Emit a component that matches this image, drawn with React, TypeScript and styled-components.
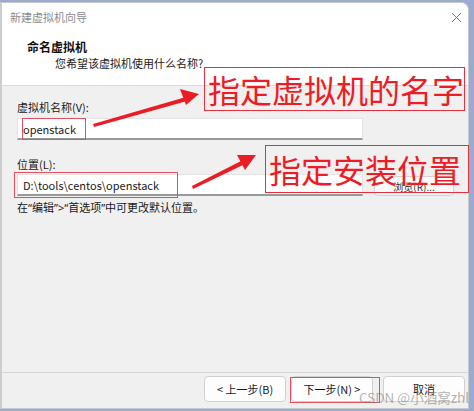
import React from "react"
import styled, { createGlobalStyle } from "styled-components"

const GlobalStyle = createGlobalStyle`
    * { box-sizing: border-box; }
    body {
        margin: 0;
        font-family: "Noto Sans CJK SC", "Noto Sans", sans-serif;
    }
`

const Root = styled.div`
    position: relative;
    width: 474px;
    height: 411px;
    overflow: hidden;
    background: #9aabd2;
`

const Window = styled.div`
    width: 469px;
    height: 407px;
    margin-top: 2px;
    display: flex;
    flex-direction: column;
    background: #f0f0f0;
    border: 1px solid #c8c8c8;
    border-left: 2px solid #cdcdcd;
    border-top-right-radius: 8px;
    overflow: hidden;
`

const Header = styled.div`
    height: 83px;
    flex-shrink: 0;
    background: #ffffff;
    border-bottom: 1px solid #dadada;
`

const TitleBar = styled.div`
    height: 28px;
    display: flex;
    align-items: center;
    justify-content: space-between;
    padding: 0 6px 0 8px;
    font-size: 11px;
    color: #8c8c8c;
`

const Close = styled.svg`
    width: 11px;
    height: 11px;
`

const Heading = styled.div`
    margin: 8px 0 0 25px;
    font-size: 12px;
    line-height: 16px;
    font-weight: 700;
    color: #111;
`

const SubHeading = styled.div`
    margin-left: 53px;
    font-size: 11px;
    line-height: 16px;
    color: #222;
`

const Body = styled.div`
    flex: 1;
    padding: 13px 0 0 15px;
    display: flex;
    flex-direction: column;
`

const Label = styled.div<{ $top?: number }>`
    margin-top: ${(p) => p.$top ?? 0}px;
    font-size: 11px;
    line-height: 16px;
    color: #1a1a1a;
`

const Row = styled.div`
    display: flex;
    align-items: center;
    gap: 11px;
`

const Field = styled.div<{ $top: number }>`
    width: 346px;
    height: 22px;
    margin-top: ${(p) => p.$top}px;
    padding-left: 5px;
    display: flex;
    align-items: center;
    background: #ffffff;
    border: 1px solid #e4e4e4;
    border-bottom: 2px solid #9a9a9a;
    font-size: 11px;
    color: #1a1a1a;
`

const Browse = styled.div`
    width: 80px;
    height: 20px;
    margin-top: 4px;
    display: flex;
    align-items: center;
    justify-content: center;
    background: #fbfbfb;
    border: 1px solid #d4d4d4;
    border-radius: 4px;
    font-size: 10px;
    color: #333;
`

const Hint = styled.div`
    margin-top: 4px;
    font-family: "Noto Sans", "Noto Sans CJK SC", sans-serif;
    font-size: 11px;
    line-height: 16px;
    color: #1a1a1a;
`

const Footer = styled.div`
    height: 36px;
    flex-shrink: 0;
    display: flex;
    justify-content: flex-end;
    gap: 5px;
    padding: 3px 3px 0 0;
    border-top: 1px solid #d6d6d6;
`

const Button = styled.div<{ $gap?: number }>`
    width: 82px;
    height: 26px;
    margin-left: ${(p) => p.$gap ?? 0}px;
    display: flex;
    align-items: center;
    justify-content: center;
    background: #fdfdfd;
    border: 1px solid #d0d0d0;
    border-radius: 4px;
    font-size: 11px;
    color: #1a1a1a;
`

const Mark = styled.div<{ $x: number; $y: number; $w: number; $h: number }>`
    position: absolute;
    left: ${(p) => p.$x}px;
    top: ${(p) => p.$y}px;
    width: ${(p) => p.$w}px;
    height: ${(p) => p.$h}px;
    border: 1px solid #e0505f;
`

const Callout = styled.div<{ $x: number; $y: number; $w: number; $h: number }>`
    position: absolute;
    left: ${(p) => p.$x}px;
    top: ${(p) => p.$y}px;
    width: ${(p) => p.$w}px;
    height: ${(p) => p.$h}px;
    padding-left: 3px;
    display: flex;
    align-items: center;
    border: 1.5px solid #e8303c;
    font-size: 32px;
    line-height: 1;
    color: #ee1c25;
    white-space: nowrap;
`

const Arrows = styled.svg`
    position: absolute;
    left: 0;
    top: 0;
    width: 474px;
    height: 411px;
    pointer-events: none;
`

const Watermark = styled.div`
    position: absolute;
    left: 359px;
    top: 388px;
    font-size: 13.5px;
    line-height: 18px;
    color: rgba(130, 130, 130, 0.6);
    white-space: nowrap;
`

export default function App() {
    return (
        <>
            <GlobalStyle />
            <Root>
                <Window>
                    <Header>
                        <TitleBar>
                            <span>新建虚拟机向导</span>
                            <Close viewBox="0 0 11 11">
                                <path d="M1 1L10 10M10 1L1 10" stroke="#7a7a7a" strokeWidth="1" />
                            </Close>
                        </TitleBar>
                        <Heading>命名虚拟机</Heading>
                        <SubHeading>您希望该虚拟机使用什么名称?</SubHeading>
                    </Header>
                    <Body>
                        <Label>虚拟机名称(V):</Label>
                        <Field $top={3}>openstack</Field>
                        <Label $top={16}>位置(L):</Label>
                        <Row>
                            <Field $top={2}>D:\tools\centos\openstack</Field>
                            <Browse>浏览(R)...</Browse>
                        </Row>
                        <Hint>在“编辑”&gt;“首选项”中可更改默认位置。</Hint>
                    </Body>
                    <Footer>
                        <Button>&lt; 上一步(B)</Button>
                        <Button>下一步(N) &gt;</Button>
                        <Button $gap={5}>取消</Button>
                    </Footer>
                </Window>

                <Mark $x={22} $y={118} $w={64} $h={22} />
                <Mark $x={14} $y={172} $w={164} $h={26} />
                <Mark $x={290} $y={377} $w={90} $h={26} />

                <Callout $x={204} $y={67} $w={261} $h={44}>指定虚拟机的名字</Callout>
                <Callout $x={265} $y={145} $w={204} $h={48}>指定安装位置</Callout>

                <Arrows viewBox="0 0 474 411">
                    <polygon points="93,124 186,97 187,101 94,127" fill="#ec1c24" />
                    <polygon points="199,94 180,89 186,105" fill="#ec1c24" />
                    <polygon points="192,186 243,160 245,164 193,189" fill="#ec1c24" />
                    <polygon points="256,155 237,155 245,170" fill="#ec1c24" />
                </Arrows>

                <Watermark>CSDN @小酒窝zhl</Watermark>
            </Root>
        </>
    )
}
